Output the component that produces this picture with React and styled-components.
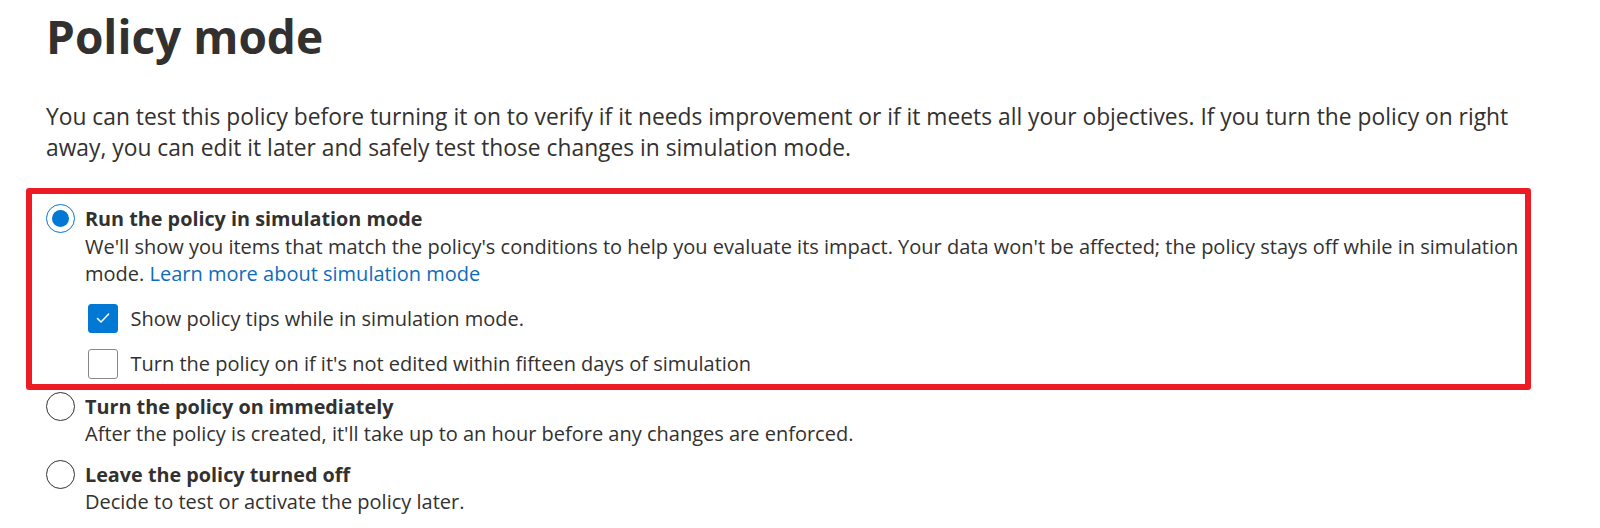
import React from "react";
import styled, { createGlobalStyle } from "styled-components";

const Global = createGlobalStyle`
  html, body { margin: 0; padding: 0; background: #fff; }
  body { font-family: "Open Sans", "Noto Sans", "Liberation Sans", sans-serif; color: #323130; }
`;

const Page = styled.div`
  width: 1600px;
  padding: 7.5px 0 0 46px;
  box-sizing: border-box;
`;

const Title = styled.h1`
  margin: 0;
  font-size: 46px;
  line-height: 56px;
  font-weight: 700;
  color: #323130;
`;

const Intro = styled.p`
  margin: 37.5px 0 0 0;
  width: 1488px;
  font-size: 22.8px;
  line-height: 31px;
`;

const Highlight = styled.div`
  margin: 25px 0 0 -20px;
  width: 1505px;
  box-sizing: border-box;
  border: 6px solid #ed1c24;
  border-radius: 3px;
  padding: 10px 0 5px 14px;
`;

const Option = styled.div`
  display: flex;
  align-items: flex-start;
  gap: 10px;
  margin-top: ${(p) => p.$top || 0}px;
`;

const Radio = styled.span`
  flex: none;
  width: 29px;
  height: 29px;
  box-sizing: border-box;
  border-radius: 50%;
  border: 1.5px solid ${(p) => (p.$checked ? "#0078d4" : "#323130")};
  display: flex;
  align-items: center;
  justify-content: center;
  &::after {
    content: "";
    display: ${(p) => (p.$checked ? "block" : "none")};
    width: 17px;
    height: 17px;
    border-radius: 50%;
    background: #0078d4;
  }
`;

const Body = styled.div`
  flex: 1;
  margin-top: 1px;
`;

const Label = styled.div`
  font-size: 19.8px;
  font-weight: 700;
  line-height: 27.5px;
`;

const Desc = styled.p`
  margin: 0;
  font-size: 20px;
  line-height: 27.5px;
`;

const Link = styled.a`
  color: #0f6cbd;
  text-decoration: none;
`;

const CheckRow = styled.div`
  display: flex;
  align-items: center;
  gap: 13px;
  margin-top: ${(p) => p.$top || 0}px;
  margin-left: 3px;
`;

const Box = styled.span`
  flex: none;
  width: 29.5px;
  height: 29.5px;
  box-sizing: border-box;
  border-radius: 3px;
  border: 1.5px solid ${(p) => (p.$checked ? "#0078d4" : "#8a8886")};
  background: ${(p) => (p.$checked ? "#0078d4" : "#fff")};
  display: flex;
  align-items: center;
  justify-content: center;
`;

const CheckText = styled.span`
  font-size: 20px;
  line-height: 27.5px;
`;

const Check = ({ checked, children, top }) => (
  <CheckRow $top={top}>
    <Box $checked={checked}>
      {checked && (
        <svg width="18" height="18" viewBox="0 0 18 18">
          <path d="M3.5 9.5 L7 13 L14.5 5.2" fill="none" stroke="#fff" strokeWidth="1.6" strokeLinecap="round" strokeLinejoin="round" />
        </svg>
      )}
    </Box>
    <CheckText>{children}</CheckText>
  </CheckRow>
);

export default function App() {
  return (
    <Page>
      <Global />
      <Title>Policy mode</Title>
      <Intro>
        You can test this policy before turning it on to verify if it needs improvement or if it meets all your objectives. If you turn the policy on right away, you can edit it later and safely test those changes in simulation mode.
      </Intro>
      <Highlight>
        <Option>
          <Radio $checked />
          <Body>
            <Label>Run the policy in simulation mode</Label>
            <Desc>
              We'll show you items that match the policy's conditions to help you evaluate its impact. Your data won't be affected; the policy stays off while in simulation mode.{" "}
              <Link href="#">Learn more about simulation mode</Link>
            </Desc>
            <Check checked top={16}>Show policy tips while in simulation mode.</Check>
            <Check top={16}>Turn the policy on if it's not edited within fifteen days of simulation</Check>
          </Body>
        </Option>
      </Highlight>
      <Option $top={2}>
        <Radio />
        <Body>
          <Label>Turn the policy on immediately</Label>
          <Desc>After the policy is created, it'll take up to an hour before any changes are enforced.</Desc>
        </Body>
      </Option>
      <Option $top={12}>
        <Radio />
        <Body>
          <Label>Leave the policy turned off</Label>
          <Desc>Decide to test or activate the policy later.</Desc>
        </Body>
      </Option>
    </Page>
  );
}
